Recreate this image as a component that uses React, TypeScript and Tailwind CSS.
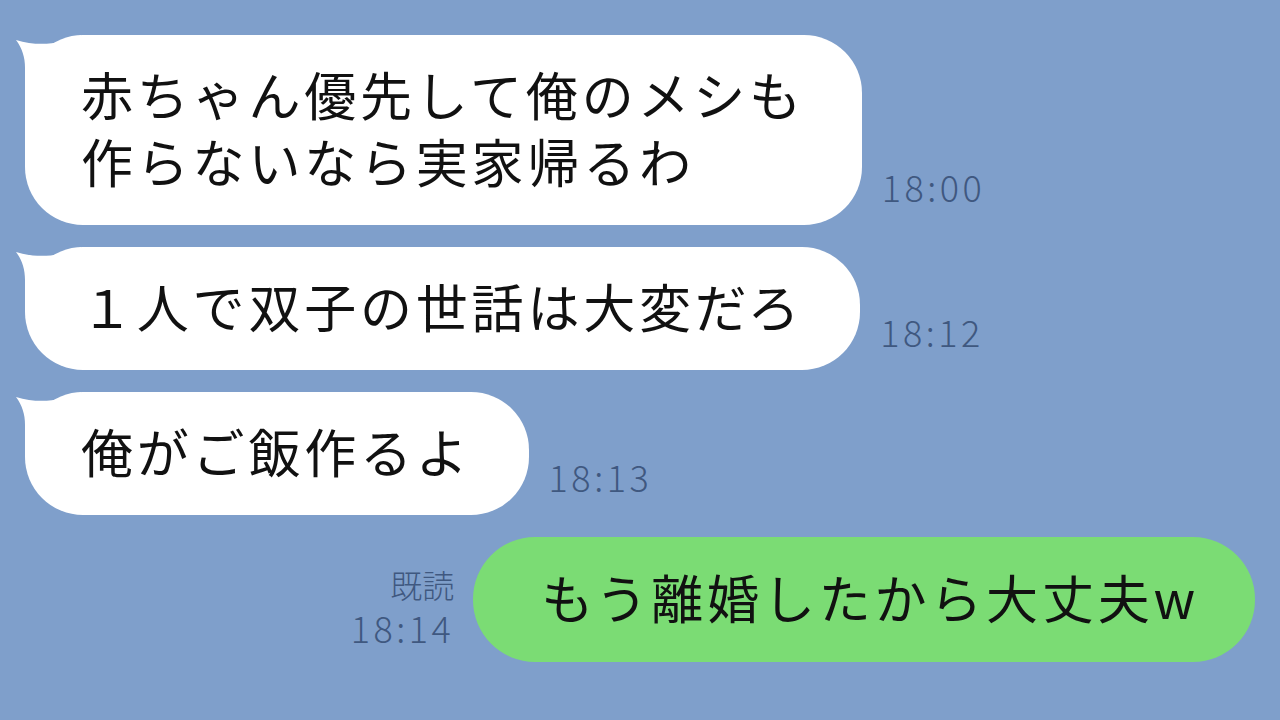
import React from "react";

type Incoming = {
  lines: string[];
  time: string;
};

const incoming: Incoming[] = [
  { lines: ["赤ちゃん優先して俺のメシも", "作らないなら実家帰るわ"], time: "18:00" },
  { lines: ["１人で双子の世話は大変だろ"], time: "18:12" },
  { lines: ["俺がご飯作るよ"], time: "18:13" },
];

const font = { fontFamily: '"Noto Sans CJK JP", "Noto Sans", sans-serif' };

// Little speech tail on the top-left of a received bubble
function Tail() {
  return (
    <svg
      className="absolute left-0 top-0 overflow-visible"
      width="60"
      height="60"
      viewBox="0 0 60 60"
    >
      <path d="M56,0 C36,9 14,12 -9,5 C-3,13 0,22 0,33 L0,60 L60,60 Z" fill="#ffffff" />
    </svg>
  );
}

function IncomingRow({ msg }: { msg: Incoming }) {
  return (
    <div className="flex items-end gap-[20px]">
      <div className="relative">
        <Tail />
        <div className="relative rounded-[58px] bg-white pl-[56px] pr-[57px] pt-[25px] pb-[31px] text-[52px] leading-[67px] tracking-[3.8px] text-[#111111] whitespace-nowrap">
          {msg.lines.map((l, i) => (
            <div key={i}>{l}</div>
          ))}
        </div>
      </div>
      <div className="mb-[21px] text-[36px] font-light leading-[36px] tracking-[3.5px] text-[#3f5880]">
        {msg.time}
      </div>
    </div>
  );
}

export default function App() {
  return (
    <div className="h-[720px] w-[1280px] overflow-hidden bg-[#7f9fcb]" style={font}>
      <div className="flex flex-col gap-[22px] px-[25px] pt-[35px]">
        {incoming.map((m) => (
          <IncomingRow key={m.time} msg={m} />
        ))}

        {/* Sent message */}
        <div className="flex items-end justify-end gap-[19px]">
          <div className="mb-[13px] flex flex-col items-end font-light text-[#3f5880]">
            <div className="text-[32px] leading-[42px]">既読</div>
            <div className="text-[36px] leading-[44px] tracking-[3.5px]">18:14</div>
          </div>
          <div className="rounded-[62px] bg-[#7bdc74] pl-[68px] pr-[56px] pt-[26px] pb-[32px] text-[52px] leading-[67px] tracking-[3.8px] text-[#111111] whitespace-nowrap">
            もう離婚したから大丈夫w
          </div>
        </div>
      </div>
    </div>
  );
}
